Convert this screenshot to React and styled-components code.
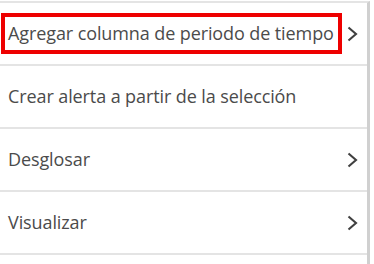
import React from "react";
import styled, { createGlobalStyle } from "styled-components";

const Global = createGlobalStyle`
  html, body { margin: 0; padding: 0; background: #fff; }
  body { width: 374px; height: 264px; overflow: hidden; }
`;

const Panel = styled.div`
  width: 370px;
  height: 263px;
  border-right: 3px solid #d0d0d0;
  box-sizing: border-box;
  font-family: "Open Sans", "Liberation Sans", sans-serif;
  border-top: 2px solid #e4e4e4;
  margin-top: 1px;
  overflow: hidden;
`;

const Row = styled.div`
  height: 61px;
  border-bottom: 2px solid #e4e4e4;
  display: flex;
  align-items: center;
  justify-content: space-between;
  padding: 0 8px 0 1px;
`;

const Label = styled.span`
  font-size: 18px;
  letter-spacing: -0.1px;
  color: #4b4b4b;
  padding: 4px 4px 5px 3px;
  border: 4px solid ${(p) => (p.$hl ? "#ee0000" : "transparent")};
  white-space: nowrap;
`;

const Chevron = () => (
  <svg width="13" height="16" viewBox="0 0 13 16">
    <path d="M2.5 1.5 L10 8 L2.5 14.5" fill="none" stroke="#404040" strokeWidth="2.1" />
  </svg>
);

const items = [
  { label: "Agregar columna de periodo de tiempo", sub: true, hl: true },
  { label: "Crear alerta a partir de la selección", sub: false },
  { label: "Desglosar", sub: true },
  { label: "Visualizar", sub: true },
];

export default function App() {
  return (
    <>
      <Global />
      <Panel>
        {items.map((it) => (
          <Row key={it.label}>
            <Label $hl={it.hl}>{it.label}</Label>
            {it.sub && <Chevron />}
          </Row>
        ))}
      </Panel>
    </>
  );
}
